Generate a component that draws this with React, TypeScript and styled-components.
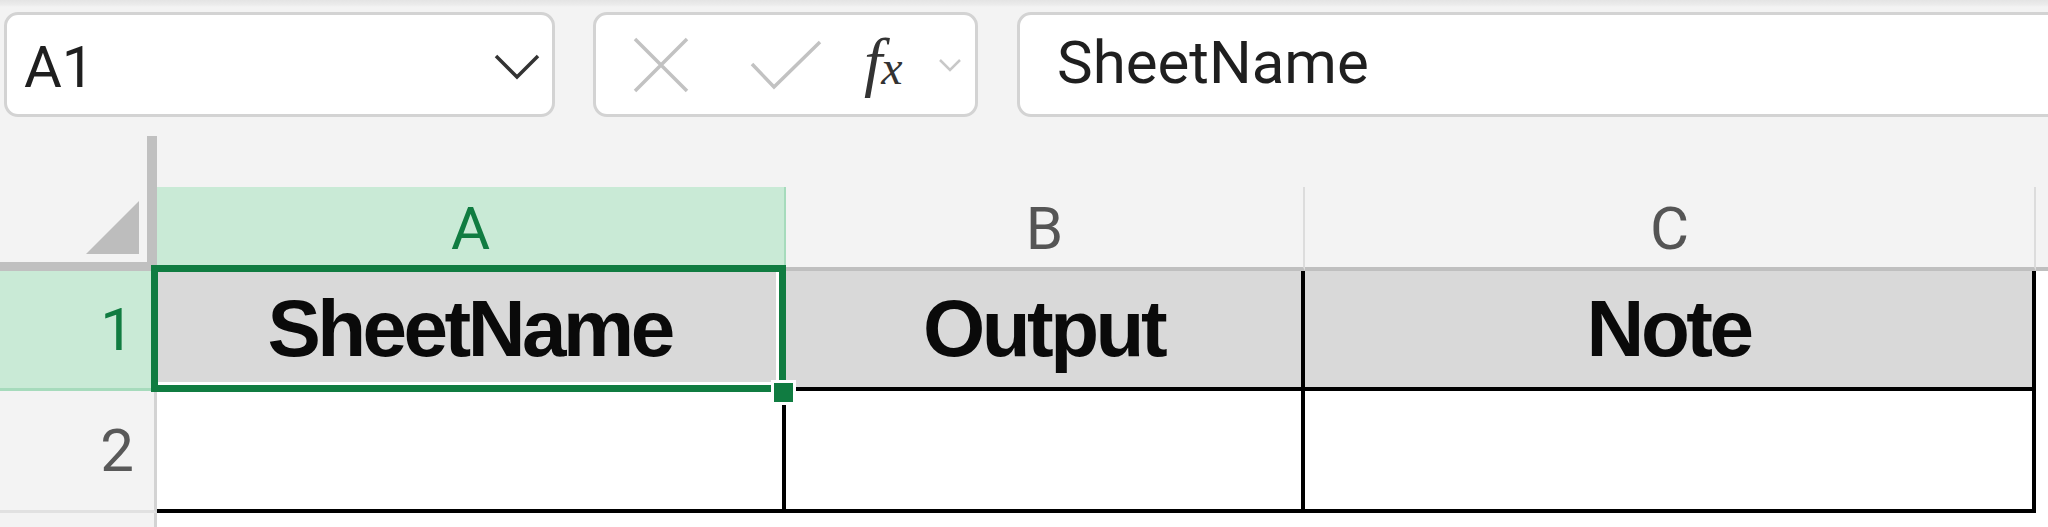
import React from 'react';
import styled, { createGlobalStyle } from 'styled-components';

const GlobalStyle = createGlobalStyle`
  html, body {
    margin: 0;
    padding: 0;
    background: #f3f3f3;
    overflow: hidden;
  }
`;

const Page = styled.div`
  width: 2048px;
  height: 527px;
  overflow: hidden;
  background: linear-gradient(#e4e4e4 0, #ececec 5px, #f3f3f3 7px);
`;

const FormulaBar = styled.div`
  display: flex;
  align-items: stretch;
  height: 105px;
  padding: 12px 0 0 4px;
`;

const Box = styled.div`
  display: flex;
  align-items: center;
  box-sizing: border-box;
  background: #fff;
  border: 3px solid #d3d3d3;
  border-radius: 14px;
`;

const NameBox = styled(Box)`
  width: 551px;
  padding: 4px 11px 0 17px;
  justify-content: space-between;
  font-family: Roboto, 'Noto Sans', sans-serif;
  font-size: 58px;
  color: #1f1f1f;
`;

const FxBox = styled(Box)`
  width: 385px;
  margin-left: 38px;
  padding-left: 37px;
`;

const FormulaInput = styled(Box)`
  flex: 1;
  margin: 0 -40px 0 39px;
  padding: 0 0 4px 37px;
  font-family: Roboto, 'Noto Sans', sans-serif;
  font-size: 60px;
  color: #1f1f1f;
`;

const Icon = styled.svg<{ $gap?: number }>`
  flex: none;
  margin-left: ${(p) => p.$gap ?? 0}px;
`;

const FxLabel = styled.span`
  display: flex;
  align-items: baseline;
  margin: 0 0 6px 42px;
  width: 54px;
  font-family: 'Liberation Serif', serif;
  font-style: italic;
  color: #333;
  font-size: 66px;
  line-height: 1;

  sub {
    font-size: 48px;
    vertical-align: baseline;
    margin-left: -1px;
  }
`;

const Sheet = styled.div`
  position: relative;
  display: grid;
  grid-template-columns: 157px 629px 519px 731px 1fr;
  grid-template-rows: 51px 84px 120px 122px 1fr;
  height: 391px;
  margin-top: 19px;
`;

const Corner = styled.div`
  grid-column: 1;
  grid-row: 1 / 3;
  display: flex;
  align-items: flex-end;
  justify-content: flex-end;
  padding: 0 8px 8px 0;
  border-right: 10px solid #c0c0c0;
  border-bottom: 9px solid #c0c0c0;
`;

const ColHeader = styled.div<{ $col: number; $active?: boolean; $last?: boolean }>`
  grid-column: ${(p) => p.$col};
  grid-row: 2;
  display: flex;
  align-items: center;
  justify-content: center;
  box-sizing: border-box;
  padding-top: 2px;
  background: ${(p) => (p.$active ? '#c9ead6' : '#f3f3f3')};
  border-right: ${(p) => (p.$last ? 'none' : p.$active ? '2px solid #a6dbbc' : '2px solid #dcdcdc')};
  border-bottom: 4px solid #bfbfbf;
  font-family: Roboto, 'Noto Sans', sans-serif;
  font-size: 60px;
  color: ${(p) => (p.$active ? '#107c41' : '#555')};
`;

const RowHeader = styled.div<{ $row: number; $active?: boolean }>`
  grid-column: 1;
  grid-row: ${(p) => p.$row};
  display: flex;
  align-items: center;
  justify-content: flex-end;
  box-sizing: border-box;
  padding-right: 20px;
  background: ${(p) => (p.$active ? '#c9ead6' : '#f3f3f3')};
  border-right: 3px solid #d3d3d3;
  border-bottom: 3px solid ${(p) => (p.$active ? '#a6dbbc' : '#e1e1e1')};
  font-family: Roboto, 'Noto Sans', sans-serif;
  font-size: 60px;
  color: ${(p) => (p.$active ? '#107c41' : '#595959')};
`;

const RowFiller = styled.div`
  grid-column: 1;
  grid-row: 5;
  background: #f3f3f3;
  border-right: 3px solid #d3d3d3;
`;

const Cell = styled.div<{ $col: number; $row: number; $shaded?: boolean }>`
  grid-column: ${(p) => p.$col};
  grid-row: ${(p) => p.$row};
  display: flex;
  align-items: center;
  justify-content: center;
  box-sizing: border-box;
  background: ${(p) => (p.$shaded ? '#d9d9d9' : '#fff')};
  border-right: 4px solid #000;
  border-bottom: 4px solid #000;
  font-family: 'Liberation Sans', Arial, sans-serif;
  font-weight: bold;
  font-size: 80px;
  letter-spacing: -3.5px;
  color: #0a0a0a;
`;

const Blank = styled.div<{ $col: string; $row: string }>`
  grid-column: ${(p) => p.$col};
  grid-row: ${(p) => p.$row};
  background: #fff;
`;

const Selection = styled.div`
  position: absolute;
  left: 151px;
  top: 129px;
  width: 635px;
  height: 127px;
  box-sizing: border-box;
  border: 7px solid #107c41;
  box-shadow: inset -3px -3px 0 #fff;
  pointer-events: none;
`;

const FillHandle = styled.div`
  position: absolute;
  left: 771px;
  top: 244px;
  width: 25px;
  height: 25px;
  box-sizing: border-box;
  background: #107c41;
  border: 3px solid #fff;
`;

const columns = ['A', 'B', 'C'];
const headerRow = ['SheetName', 'Output', 'Note'];

export default function App() {
  return (
    <Page>
      <GlobalStyle />
      <FormulaBar>
        <NameBox>
          <span>A1</span>
          <Icon width="48" height="28" viewBox="0 0 48 28">
            <path d="M3 3 L24 24 L45 3" fill="none" stroke="#333" strokeWidth="3.5" />
          </Icon>
        </NameBox>
        <FxBox>
          <Icon width="56" height="56" viewBox="0 0 56 56">
            <path d="M2 2 L54 54 M54 2 L2 54" stroke="#c2c2c2" strokeWidth="3.5" fill="none" />
          </Icon>
          <Icon $gap={61} width="72" height="50" viewBox="0 0 72 50">
            <path d="M2 24 L24 47 L70 2" stroke="#c2c2c2" strokeWidth="3.5" fill="none" />
          </Icon>
          <FxLabel>
            f<sub>x</sub>
          </FxLabel>
          <Icon $gap={20} width="24" height="14" viewBox="0 0 24 14">
            <path d="M2 2 L12 12 L22 2" stroke="#c8c8c8" strokeWidth="2.5" fill="none" />
          </Icon>
        </FxBox>
        <FormulaInput>SheetName</FormulaInput>
      </FormulaBar>

      <Sheet>
        <Corner>
          <svg width="53" height="53" viewBox="0 0 53 53">
            <polygon points="53,0 53,53 0,53" fill="#bdbdbd" />
          </svg>
        </Corner>
        {columns.map((c, i) => (
          <ColHeader key={c} $col={i + 2} $active={i === 0}>
            {c}
          </ColHeader>
        ))}
        <ColHeader $col={5} $last />

        <RowHeader $row={3} $active>
          1
        </RowHeader>
        {headerRow.map((t, i) => (
          <Cell key={t} $col={i + 2} $row={3} $shaded>
            {t}
          </Cell>
        ))}
        <Blank $col="5" $row="3" />

        <RowHeader $row={4}>2</RowHeader>
        {columns.map((c, i) => (
          <Cell key={c} $col={i + 2} $row={4} />
        ))}
        <Blank $col="5" $row="4" />

        <RowFiller />
        <Blank $col="2 / -1" $row="5" />

        <Selection />
        <FillHandle />
      </Sheet>
    </Page>
  );
}
